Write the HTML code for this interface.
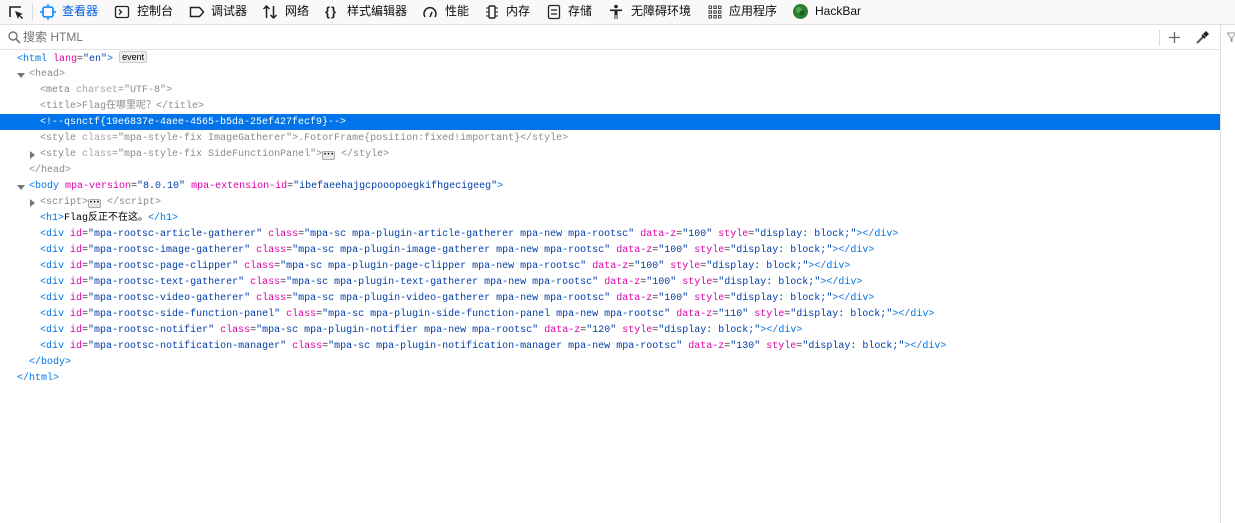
<!DOCTYPE html>
<html><head><meta charset="utf-8"><style>
body{margin:0;width:1235px;height:523px;background:#fff;position:relative;overflow:hidden;font-family:"Liberation Sans","Noto Sans CJK SC",sans-serif}
.tb{position:absolute;left:0;top:0;width:1235px;height:25px;background:#f9f9fa;border-bottom:1px solid #e0e0e2;box-sizing:border-box}
.t{position:absolute;top:4px;font-size:12px;color:#0c0c0d;line-height:15px;white-space:nowrap}
.ic{position:absolute;top:5px;width:16px;height:14px;font-size:13px;line-height:14px;color:#222;text-align:center}
.sb{position:absolute;left:0;top:25px;width:1220px;height:25px;border-bottom:1px solid #e0e0e2;box-sizing:border-box;background:#fff}
.side{position:absolute;left:1220px;top:25px;width:15px;height:498px;border-left:1px solid #e0e0e2;background:#fff}
.ln{position:absolute;left:0;width:1220px;height:16px;line-height:16px;font-family:"Liberation Mono","Noto Sans CJK SC",monospace;font-size:10px;white-space:pre;color:#0074e8}
.ln span.in{position:absolute;top:1px}
.a{color:#dd00a9}.v{color:#003eaa}.p{color:#38383d}
.g{color:#8a8a8e}.g .a{color:#b0a0b0}.g .v{color:#8a8a8e}
.hl{background:#0074e8;color:#fff}
.tw{position:absolute;width:0;height:0;border-left:4px solid transparent;border-right:4px solid transparent;border-top:5px solid #777}
.tr{position:absolute;width:0;height:0;border-top:4px solid transparent;border-bottom:4px solid transparent;border-left:5px solid #777}
.dots{display:inline-block;width:11px;height:7px;border:1px solid #aaa;border-radius:2px;background:#e8e8e8;font-size:6px;line-height:6px;text-align:center;vertical-align:0;color:#000}
.ev{display:inline-block;border:1px solid #ccc;border-radius:2px;background:#eee;color:#000;font-family:"Liberation Sans",sans-serif;font-size:9px;line-height:10px;padding:0 2px;vertical-align:1px}
</style></head><body>
<div class="tb">
 <svg style="position:absolute;left:8px;top:4px" width="16" height="16"><path d="M2 13V3h11" fill="none" stroke="#222" stroke-width="1.6"/><path d="M7 7l8 3-3 1 3 3-1 1-3-3-1 3z" fill="#222"/></svg>
 <div style="position:absolute;left:32px;top:3px;width:1px;height:18px;background:#ddd"></div>
 <svg style="position:absolute;left:40px;top:4px" width="16" height="16"><rect x="3" y="3" width="10" height="10" rx="2" fill="none" stroke="#0a84ff" stroke-width="1.6"/><path d="M8 0v3M8 13v3M0 8h3M13 8h3" stroke="#0a84ff" stroke-width="1.4"/></svg>
 <div class="t" style="left:62px;color:#0060df">查看器</div>
 <svg style="position:absolute;left:114px;top:4px" width="16" height="16"><rect x="1.5" y="2.5" width="13" height="11" rx="1.5" fill="none" stroke="#222" stroke-width="1.3"/><path d="M5 5.5l2.5 2.5L5 10.5" fill="none" stroke="#222" stroke-width="1.3"/></svg>
 <div class="t" style="left:137px">控制台</div>
 <svg style="position:absolute;left:189px;top:4px" width="16" height="16"><path d="M1.5 3.5h9l4 4.5-4 4.5h-9z" fill="none" stroke="#222" stroke-width="1.4"/></svg>
 <div class="t" style="left:211px">调试器</div>
 <svg style="position:absolute;left:262px;top:4px" width="16" height="16"><path d="M4.5 2v12M1.5 5l3-3 3 3M11.5 14V2M8.5 11l3 3 3-3" fill="none" stroke="#222" stroke-width="1.5"/></svg>
 <div class="t" style="left:285px">网络</div>
 <div class="ic" style="left:323px;font-weight:bold;letter-spacing:1px">{}</div>
 <div class="t" style="left:347px">样式编辑器</div>
 <svg style="position:absolute;left:422px;top:4px" width="16" height="16"><path d="M3 13A6 6 0 1 1 13 13" fill="none" stroke="#222" stroke-width="1.5"/><path d="M8 13l2-5" stroke="#222" stroke-width="1.5"/></svg>
 <div class="t" style="left:445px">性能</div>
 <svg style="position:absolute;left:484px;top:4px" width="16" height="16"><rect x="5" y="2" width="6" height="12" rx="1" fill="none" stroke="#222" stroke-width="1.4"/><path d="M2 4h3M2 8h3M2 12h3M11 4h3M11 8h3M11 12h3" stroke="#222"/></svg>
 <div class="t" style="left:506px">内存</div>
 <svg style="position:absolute;left:546px;top:4px" width="16" height="16"><rect x="2.5" y="1.5" width="11" height="13" rx="1.5" fill="none" stroke="#222" stroke-width="1.3"/><path d="M5 6h6M5 10h6" stroke="#222" stroke-width="1.3"/></svg>
 <div class="t" style="left:568px">存储</div>
 <svg style="position:absolute;left:608px;top:4px" width="16" height="16"><circle cx="8" cy="2.5" r="1.8" fill="#222"/><path d="M2 5.5h12v1.6H9.5V15H8.6v-4h-1.2v4H6.5V7.1H2z" fill="#222"/></svg>
 <div class="t" style="left:631px">无障碍环境</div>
 <svg style="position:absolute;left:707px;top:4px" width="16" height="16" fill="none" stroke="#444"><rect x="2" y="2" width="2.5" height="2.5"/><rect x="6.8" y="2" width="2.5" height="2.5"/><rect x="11.5" y="2" width="2.5" height="2.5"/><rect x="2" y="6.8" width="2.5" height="2.5"/><rect x="6.8" y="6.8" width="2.5" height="2.5"/><rect x="11.5" y="6.8" width="2.5" height="2.5"/><rect x="2" y="11.5" width="2.5" height="2.5"/><rect x="6.8" y="11.5" width="2.5" height="2.5"/><rect x="11.5" y="11.5" width="2.5" height="2.5"/></svg>
 <div class="t" style="left:729px">应用程序</div>
 <svg style="position:absolute;left:792px;top:3px" width="17" height="17"><circle cx="8.5" cy="8.5" r="7.5" fill="#2e7d32"/><circle cx="7" cy="7" r="3" fill="#4caf50"/><circle cx="10" cy="10" r="2.5" fill="#1b5e20"/></svg>
 <div class="t" style="left:815px">HackBar</div>
</div>
<div class="sb">
 <svg style="position:absolute;left:8px;top:6px" width="13" height="13"><circle cx="5" cy="5" r="4" fill="none" stroke="#777" stroke-width="1.4"/><path d="M8 8l4 4" stroke="#777" stroke-width="1.6"/></svg>
 <div style="position:absolute;left:23px;top:5px;font-size:12px;line-height:15px;color:#737373">搜索 HTML</div>
 <div style="position:absolute;left:1159px;top:5px;width:1px;height:16px;background:#ddd"></div>
 <svg style="position:absolute;left:1168px;top:6px" width="13" height="13"><path d="M6.5 1v11M1 6.5h11" stroke="#666" stroke-width="1.3"/></svg>
 <svg style="position:absolute;left:1195px;top:5px" width="15" height="15"><path d="M2 13l6-6" stroke="#555" stroke-width="2"/><path d="M8 4l3-3 3 3-3 3z" fill="#222"/><path d="M7 5l3 3" stroke="#222" stroke-width="2"/></svg>
</div>
<div class="side"><svg style="position:absolute;left:6px;top:7px" width="9" height="10"><path d="M0 1h9L5 6v4L4 9V6z" fill="none" stroke="#999"/></svg></div>

<div class="ln" style="top:50px"><span class="in" style="left:17px">&lt;html <span class="a">lang</span><span class="p">=</span><span class="v">"en"</span>&gt; <span class="ev">event</span></span></div>
<div class="ln" style="top:66px"><i class="tw" style="left:17px;top:7px"></i><span class="in g" style="left:29px">&lt;head&gt;</span></div>
<div class="ln g" style="top:82px"><span class="in" style="left:40px">&lt;meta <span class="a">charset</span>=<span class="v">"UTF-8"</span>&gt;</span></div>
<div class="ln g" style="top:98px"><span class="in" style="left:40px">&lt;title&gt;Flag在哪里呢？&lt;/title&gt;</span></div>
<div class="ln hl" style="top:114px"><span class="in" style="left:40px">&lt;!--qsnctf{19e6837e-4aee-4565-b5da-25ef427fecf9}--&gt;</span></div>
<div class="ln g" style="top:130px"><span class="in" style="left:40px">&lt;style <span class="a">class</span>=<span class="v">"mpa-style-fix ImageGatherer"</span>&gt;.FotorFrame{position:fixed!important}&lt;/style&gt;</span></div>
<div class="ln g" style="top:146px"><i class="tr" style="left:30px;top:5px"></i><span class="in" style="left:40px">&lt;style <span class="a">class</span>=<span class="v">"mpa-style-fix SideFunctionPanel"</span>&gt;<span class="dots">•••</span> &lt;/style&gt;</span></div>
<div class="ln g" style="top:162px"><span class="in" style="left:29px">&lt;/head&gt;</span></div>
<div class="ln" style="top:178px"><i class="tw" style="left:17px;top:7px"></i><span class="in" style="left:29px">&lt;body <span class="a">mpa-version</span><span class="p">=</span><span class="v">"8.0.10"</span> <span class="a">mpa-extension-id</span><span class="p">=</span><span class="v">"ibefaeehajgcpooopoegkifhgecigeeg"</span>&gt;</span></div>
<div class="ln g" style="top:194px"><i class="tr" style="left:30px;top:5px"></i><span class="in" style="left:40px">&lt;script&gt;<span class="dots">•••</span> &lt;/script&gt;</span></div>
<div class="ln" style="top:210px"><span class="in" style="left:40px">&lt;h1&gt;<span style="color:#000">Flag反正不在这。</span>&lt;/h1&gt;</span></div>
<div class="ln" style="top:226px"><span class="in" style="left:40px">&lt;div <span class="a">id</span><span class="p">=</span><span class="v">"mpa-rootsc-article-gatherer"</span> <span class="a">class</span><span class="p">=</span><span class="v">"mpa-sc mpa-plugin-article-gatherer mpa-new mpa-rootsc"</span> <span class="a">data-z</span><span class="p">=</span><span class="v">"100"</span> <span class="a">style</span><span class="p">=</span><span class="v">"display: block;"</span>&gt;&lt;/div&gt;</span></div>
<div class="ln" style="top:242px"><span class="in" style="left:40px">&lt;div <span class="a">id</span><span class="p">=</span><span class="v">"mpa-rootsc-image-gatherer"</span> <span class="a">class</span><span class="p">=</span><span class="v">"mpa-sc mpa-plugin-image-gatherer mpa-new mpa-rootsc"</span> <span class="a">data-z</span><span class="p">=</span><span class="v">"100"</span> <span class="a">style</span><span class="p">=</span><span class="v">"display: block;"</span>&gt;&lt;/div&gt;</span></div>
<div class="ln" style="top:258px"><span class="in" style="left:40px">&lt;div <span class="a">id</span><span class="p">=</span><span class="v">"mpa-rootsc-page-clipper"</span> <span class="a">class</span><span class="p">=</span><span class="v">"mpa-sc mpa-plugin-page-clipper mpa-new mpa-rootsc"</span> <span class="a">data-z</span><span class="p">=</span><span class="v">"100"</span> <span class="a">style</span><span class="p">=</span><span class="v">"display: block;"</span>&gt;&lt;/div&gt;</span></div>
<div class="ln" style="top:274px"><span class="in" style="left:40px">&lt;div <span class="a">id</span><span class="p">=</span><span class="v">"mpa-rootsc-text-gatherer"</span> <span class="a">class</span><span class="p">=</span><span class="v">"mpa-sc mpa-plugin-text-gatherer mpa-new mpa-rootsc"</span> <span class="a">data-z</span><span class="p">=</span><span class="v">"100"</span> <span class="a">style</span><span class="p">=</span><span class="v">"display: block;"</span>&gt;&lt;/div&gt;</span></div>
<div class="ln" style="top:290px"><span class="in" style="left:40px">&lt;div <span class="a">id</span><span class="p">=</span><span class="v">"mpa-rootsc-video-gatherer"</span> <span class="a">class</span><span class="p">=</span><span class="v">"mpa-sc mpa-plugin-video-gatherer mpa-new mpa-rootsc"</span> <span class="a">data-z</span><span class="p">=</span><span class="v">"100"</span> <span class="a">style</span><span class="p">=</span><span class="v">"display: block;"</span>&gt;&lt;/div&gt;</span></div>
<div class="ln" style="top:306px"><span class="in" style="left:40px">&lt;div <span class="a">id</span><span class="p">=</span><span class="v">"mpa-rootsc-side-function-panel"</span> <span class="a">class</span><span class="p">=</span><span class="v">"mpa-sc mpa-plugin-side-function-panel mpa-new mpa-rootsc"</span> <span class="a">data-z</span><span class="p">=</span><span class="v">"110"</span> <span class="a">style</span><span class="p">=</span><span class="v">"display: block;"</span>&gt;&lt;/div&gt;</span></div>
<div class="ln" style="top:322px"><span class="in" style="left:40px">&lt;div <span class="a">id</span><span class="p">=</span><span class="v">"mpa-rootsc-notifier"</span> <span class="a">class</span><span class="p">=</span><span class="v">"mpa-sc mpa-plugin-notifier mpa-new mpa-rootsc"</span> <span class="a">data-z</span><span class="p">=</span><span class="v">"120"</span> <span class="a">style</span><span class="p">=</span><span class="v">"display: block;"</span>&gt;&lt;/div&gt;</span></div>
<div class="ln" style="top:338px"><span class="in" style="left:40px">&lt;div <span class="a">id</span><span class="p">=</span><span class="v">"mpa-rootsc-notification-manager"</span> <span class="a">class</span><span class="p">=</span><span class="v">"mpa-sc mpa-plugin-notification-manager mpa-new mpa-rootsc"</span> <span class="a">data-z</span><span class="p">=</span><span class="v">"130"</span> <span class="a">style</span><span class="p">=</span><span class="v">"display: block;"</span>&gt;&lt;/div&gt;</span></div>
<div class="ln" style="top:354px"><span class="in" style="left:29px">&lt;/body&gt;</span></div>
<div class="ln" style="top:370px"><span class="in" style="left:17px">&lt;/html&gt;</span></div>
</body></html>
